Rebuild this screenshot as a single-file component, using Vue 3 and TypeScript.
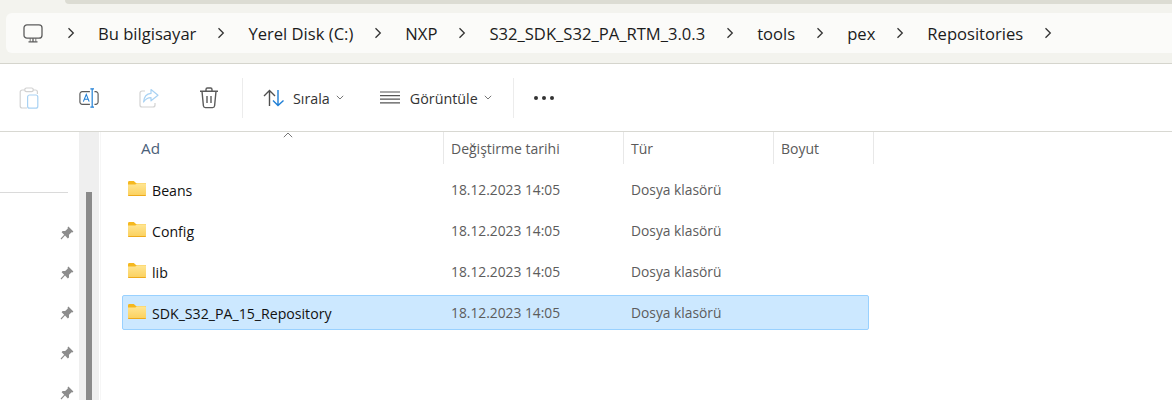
<script setup lang="ts">
const crumbs = ['Bu bilgisayar', 'Yerel Disk (C:)', 'NXP', 'S32_SDK_S32_PA_RTM_3.0.3', 'tools', 'pex', 'Repositories']

const folders = [
  { name: 'Beans', selected: false },
  { name: 'Config', selected: false },
  { name: 'lib', selected: false },
  { name: 'SDK_S32_PA_15_Repository', selected: true },
]

const pins = [1, 2, 3, 4, 5]
</script>

<template>
  <div class="window">
    <!-- Address bar -->
    <div class="top">
      <div class="top-edge"></div>
      <nav class="crumbs">
        <svg class="pc" viewBox="0 0 20 19" width="20" height="19" fill="none" stroke="#5c5c5c" stroke-width="1.3">
          <rect x="1" y="0.8" width="18" height="13.4" rx="3" />
          <path d="M10 14.2v3.6M5.5 17.9h9" />
          <path d="M7.2 14.2v3.4M12.8 14.2v3.4" stroke-width="0.8" />
        </svg>
        <svg class="chev" viewBox="0 0 8 12" width="8" height="12" fill="none" stroke="#333" stroke-width="1.3"><path d="M1.5 1.2 6.3 6l-4.8 4.8" /></svg>
        <template v-for="c in crumbs" :key="c">
          <span class="crumb">{{ c }}</span>
          <svg class="chev" viewBox="0 0 8 12" width="8" height="12" fill="none" stroke="#333" stroke-width="1.3"><path d="M1.5 1.2 6.3 6l-4.8 4.8" /></svg>
        </template>
      </nav>
    </div>

    <!-- Command bar -->
    <div class="toolbar">
      <button class="tool">
        <svg viewBox="0 0 20 22" width="20" height="22" fill="none" stroke-width="1.2">
          <path d="M6 3H3.2A2 2 0 0 0 1.2 5v14a2 2 0 0 0 2 2H8" stroke="#d2d2d2" />
          <path d="M14 3h2.4a2 2 0 0 1 2 2v2" stroke="#d2d2d2" />
          <rect x="5.8" y="1" width="8.4" height="3.6" rx="1.6" stroke="#d2d2d2" />
          <rect x="8.6" y="8" width="10.2" height="13.2" rx="2" stroke="#a9d2f3" />
        </svg>
      </button>
      <button class="tool">
        <svg viewBox="0 0 22 22" width="22" height="22" fill="none">
          <path d="M12 4H3.5A2.5 2.5 0 0 0 1 6.5v9A2.5 2.5 0 0 0 3.5 18H12M17 4h1.5A2.5 2.5 0 0 1 21 6.5v9a2.5 2.5 0 0 1-2.5 2.5H17" stroke="#5c5c5c" stroke-width="1.3" />
          <path d="M14.5 1v20M12.5 1h4M12.5 21h4" stroke="#1f7fd6" stroke-width="1.3" />
          <path d="M4.8 15 8 7l3.2 8M6 12.4h4" stroke="#1f7fd6" stroke-width="1.2" />
        </svg>
      </button>
      <button class="tool">
        <svg viewBox="0 0 20 20" width="20" height="20" fill="none" stroke-width="1.2">
          <path d="M6 3H3a2 2 0 0 0-2 2v12a2 2 0 0 0 2 2h11a2 2 0 0 0 2-2v-2" stroke="#d2d2d2" />
          <path d="M12 1.5 19 7.2l-7 5.6V9.6C8.6 9.6 6.4 11 4.6 14c.4-5 3-8.2 7.4-8.6z" stroke="#a9d2f3" stroke-linejoin="round" />
        </svg>
      </button>
      <button class="tool">
        <svg viewBox="0 0 20 22" width="20" height="22" fill="none" stroke="#5a5a5a" stroke-width="1.4">
          <path d="M1 4.2h18M7 4V2.4A1.4 1.4 0 0 1 8.4 1h3.2A1.4 1.4 0 0 1 13 2.4V4" />
          <path d="M3 4.2 4.4 18.8a2 2 0 0 0 2 1.8h7.2a2 2 0 0 0 2-1.8L17 4.2" />
          <path d="M8 9v7M12 9v7" />
        </svg>
      </button>

      <div class="sep sep-a"></div>

      <button class="menu sort">
        <svg viewBox="0 0 22 18" width="22" height="18" fill="none" stroke-width="1.4">
          <path d="M6.5 17V1.5M1 7l5.5-5.5L12 7" stroke="#4f4f4f" />
          <path d="M15 1v15.5M10 11.5l5 5 5.5-5" stroke="#1f7fd6" />
        </svg>
        <span>Sırala</span>
        <svg class="caret" viewBox="0 0 8 5" width="8" height="5" fill="none" stroke="#777" stroke-width="1"><path d="M.8.8 4 4 7.2.8" /></svg>
      </button>
      <button class="menu view">
        <svg viewBox="0 0 20 13" width="20" height="13" fill="none" stroke="#555" stroke-width="1.2"><path d="M0 1h20M0 4.6h20M0 8.2h20M0 11.8h20" /></svg>
        <span>Görüntüle</span>
        <svg class="caret" viewBox="0 0 8 5" width="8" height="5" fill="none" stroke="#777" stroke-width="1"><path d="M.8.8 4 4 7.2.8" /></svg>
      </button>

      <div class="sep sep-b"></div>

      <div class="more"><i></i><i></i><i></i></div>
    </div>

    <div class="body">
      <!-- Nav pane (mostly cut off) -->
      <aside class="nav">
        <div class="nav-rule"></div>
        <div class="pins">
          <svg v-for="p in pins" :key="p" viewBox="0 0 14 14" width="14" height="14" fill="#8d8d8d">
            <path d="M8.4.6 13.4 5.6 12.4 6.4 11.6 6.2 9 8.8 9 11.4 7.8 12.4 5 9.6 1.4 13.4.6 12.6 4.2 8.8 1.6 6.2 2.6 5 5.2 5 7.8 2.4 7.6 1.6z" />
          </svg>
        </div>
      </aside>
      <div class="track"><div class="thumb"></div></div>

      <!-- File list -->
      <section class="files">
        <div class="head">
          <div class="col col-name">Ad
            <svg class="sort-arrow" viewBox="0 0 10 6" width="10" height="6" fill="none" stroke="#777" stroke-width="1"><path d="M.8 5.2 5 1l4.2 4.2" /></svg>
          </div>
          <div class="col col-date">Değiştirme tarihi</div>
          <div class="col col-type">Tür</div>
          <div class="col col-size">Boyut</div>
        </div>
        <div class="rows">
          <div v-for="f in folders" :key="f.name" class="row" :class="{ selected: f.selected }">
            <div class="cell-name">
              <svg class="folder" viewBox="0 0 18 15" width="18" height="15">
                <defs>
                  <linearGradient :id="`fold-${f.name}`" x1="0" y1="0" x2="0" y2="1">
                    <stop offset="0" stop-color="#ffe694" />
                    <stop offset="1" stop-color="#fbd05c" />
                  </linearGradient>
                </defs>
                <path d="M0 1.4A1.4 1.4 0 0 1 1.4 0h4.4L8 2h9a1 1 0 0 1 1 1v3H0z" fill="#f5b81f" />
                <path d="M0 3.4h7.4L8.8 2.2H17a1 1 0 0 1 1 1V14a1 1 0 0 1-1 1H1a1 1 0 0 1-1-1z" :fill="`url(#fold-${f.name})`" />
                <path d="M0 14h18a1 1 0 0 1-1 1H1a1 1 0 0 1-1-1z" fill="#eeaa1c" />
              </svg>
              <span>{{ f.name }}</span>
            </div>
            <div class="cell-date">18.12.2023 14:05</div>
            <div class="cell-type">Dosya klasörü</div>
          </div>
        </div>
      </section>
    </div>
  </div>
</template>

<style scoped>
.window {
  width: 1172px;
  height: 400px;
  overflow: hidden;
  background: #fff;
  font-family: "Open Sans", "Noto Sans", sans-serif;
  color: #1c1c1c;
}

/* ── Address bar ───────────────────────────── */
.top {
  height: 63px;
  background: #f3f3ee;
  border-bottom: 1px solid #d5d5cd;
  box-sizing: content-box;
}

.top-edge {
  height: 4px;
  margin-left: 65px;
  background: #dcdcd3;
  border-bottom-left-radius: 5px;
}

.crumbs {
  display: flex;
  align-items: center;
  height: 40px;
  margin: 9px 0 0 6px;
  padding-left: 17px;
  background: #fbfbf9;
  border-radius: 6px 0 0 6px;
  font-size: 16.6px;
}

.pc {
  margin-right: 24px;
}

.chev {
  flex: none;
  margin-right: 23px;
}

.crumb {
  margin-right: 21px;
  white-space: nowrap;
}

/* ── Command bar ───────────────────────────── */
.toolbar {
  display: flex;
  align-items: center;
  height: 68px;
  padding-left: 19px;
  border-bottom: 1px solid #d8d8d2;
  box-sizing: border-box;
  font-size: 14.3px;
  color: #333;
}

.tool {
  display: flex;
  justify-content: center;
  width: 20px;
  margin-right: 40px;
  padding: 0;
  border: 0;
  background: none;
}

.tool:nth-child(4) {
  margin-right: 23px;
}

.sep {
  width: 1px;
  height: 40px;
  background: #ececec;
}

.menu {
  display: flex;
  align-items: center;
  padding: 0;
  border: 0;
  background: none;
  font: inherit;
  color: inherit;
}

.menu span {
  padding-top: 2px;
}

.sort {
  margin-left: 20px;
}

.sort span {
  margin-left: 8px;
}

.view {
  margin-left: 36px;
}

.view span {
  margin-left: 10px;
}

.caret {
  margin-left: 6px;
}

.sep-b {
  margin-left: 21px;
}

.more {
  display: flex;
  gap: 4px;
  margin-left: 20px;
}

.more i {
  width: 4px;
  height: 4px;
  border-radius: 50%;
  background: #333;
}

/* ── Body ──────────────────────────────────── */
.body {
  display: flex;
  height: 268px;
}

.nav {
  width: 79px;
  flex: none;
  padding-top: 60px;
  box-sizing: border-box;
}

.nav-rule {
  height: 1px;
  margin-right: 11px;
  background: #dadada;
}

.pins {
  display: flex;
  flex-direction: column;
  align-items: flex-end;
  gap: 26px;
  margin-top: 33px;
  padding-right: 5px;
}

.track {
  width: 21px;
  flex: none;
  padding: 60px 7px 0;
  box-sizing: border-box;
  background: #efefef;
  border-right: 1px solid #fff;
  box-shadow: 1px 0 0 #f6f6f6;
}

.thumb {
  height: 100%;
  width: 6px;
  background: #8a8a8a;
}

.files {
  flex: 1;
  padding-left: 22px;
}

.head {
  display: flex;
  height: 32px;
  font-size: 14px;
  color: #5a5a5a;
}

.col {
  position: relative;
  box-sizing: border-box;
  padding: 7px 0 0 7px;
  border-right: 1px solid #e8e8e8;
}

.col-name {
  width: 322px;
  padding-left: 19px;
  color: #4b6079;
  font-size: 15.3px;
  padding-top: 6px;
}

.col-date {
  width: 180px;
}

.col-type {
  width: 150px;
}

.col-size {
  width: 100px;
}

.sort-arrow {
  position: absolute;
  left: 161px;
  top: 0;
}

.rows {
  display: flex;
  flex-direction: column;
  gap: 6px;
  width: 747px;
  margin-top: 8px;
}

.row {
  display: flex;
  align-items: center;
  height: 35px;
  box-sizing: border-box;
  border: 1px solid transparent;
  border-radius: 2px;
  font-size: 13.8px;
}

.row.selected {
  background: #cce8ff;
  border-color: #99d1ff;
}

.cell-name {
  display: flex;
  align-items: center;
  gap: 6px;
  width: 320px;
  padding-left: 5px;
  box-sizing: border-box;
  font-size: 14.15px;
  color: #111;
}

.cell-name span {
  padding-top: 1px;
}

.folder {
  margin-top: -3px;
}

.cell-date {
  width: 180px;
  padding-left: 8px;
  box-sizing: border-box;
  color: #5c5c5c;
}

.cell-type {
  padding-left: 8px;
  color: #5c5c5c;
}
</style>

<style>
body {
  background: #fff;
}
</style>
